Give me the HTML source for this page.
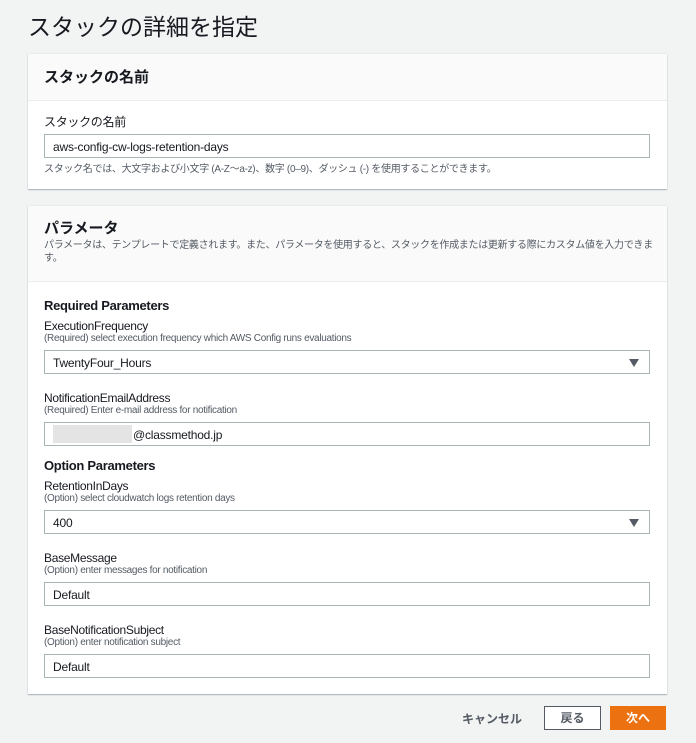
<!DOCTYPE html>
<html><head><meta charset="utf-8"><style>
*{box-sizing:border-box;margin:0;padding:0}
body{width:696px;height:743px;background:#f2f3f3;font-family:"Liberation Sans","Noto Sans CJK JP",sans-serif;color:#16191f;position:relative;overflow:hidden}
.a{position:absolute;white-space:nowrap}
.card{position:absolute;left:28px;width:639px;background:#fff;box-shadow:0 1px 1px rgba(0,31,63,.3),0 0 1px rgba(0,31,63,.15)}
.hd{background:#fafafa;border-bottom:1px solid #eaeded}
.inp{position:absolute;left:44px;width:606px;height:24px;border:1px solid #aab7b8;background:#fff;font-size:12px;padding:5px 8px;letter-spacing:-.2px}
.lb{font-size:12px;letter-spacing:-.3px}
.sub{font-size:10px;color:#545b64;letter-spacing:-.3px}
.tri{position:absolute;right:10px;top:8px;width:0;height:0;border-left:5px solid transparent;border-right:5px solid transparent;border-top:8px solid #545b64}
.h3{font-size:13px;font-weight:bold;letter-spacing:-.3px}
</style></head><body>
<div class="a" style="left:28px;top:8px;font-size:23px;color:#16191f">スタックの詳細を指定</div>
<div class="card" style="top:54px;height:135px"><div class="hd" style="height:47px"></div></div>
<div class="a" style="left:44px;top:66px;font-size:15px;font-weight:bold">スタックの名前</div>
<div class="a lb" style="left:44px;top:113px">スタックの名前</div>
<div class="inp" style="top:134px">aws-config-cw-logs-retention-days</div>
<div class="a sub" style="left:44px;top:160px">スタック名では、大文字および小文字 (A-Z～a-z)、数字 (0–9)、ダッシュ (-) を使用することができます。</div>

<div class="card" style="top:206px;height:488px"><div class="hd" style="height:76px"></div></div>
<div class="a" style="left:44px;top:217px;font-size:15px;font-weight:bold">パラメータ</div>
<div class="a sub" style="left:44px;top:239px;width:610px;white-space:normal;line-height:13px">パラメータは、テンプレートで定義されます。また、パラメータを使用すると、スタックを作成または更新する際にカスタム値を入力できます。</div>

<div class="a h3" style="left:44px;top:298px">Required Parameters</div>
<div class="a lb" style="left:44px;top:319px">ExecutionFrequency</div>
<div class="a sub" style="left:44px;top:333px">(Required) select execution frequency which AWS Config runs evaluations</div>
<div class="inp" style="top:350px">TwentyFour_Hours<div class="tri"></div></div>

<div class="a lb" style="left:44px;top:391px">NotificationEmailAddress</div>
<div class="a sub" style="left:44px;top:405px">(Required) Enter e-mail address for notification</div>
<div class="inp" style="top:422px;padding-left:88px">@classmethod.jp<div style="position:absolute;left:8px;top:2px;width:79px;height:18px;background:#e4e4e4"></div></div>

<div class="a h3" style="left:44px;top:458px">Option Parameters</div>
<div class="a lb" style="left:44px;top:479px">RetentionInDays</div>
<div class="a sub" style="left:44px;top:493px">(Option) select cloudwatch logs retention days</div>
<div class="inp" style="top:510px">400<div class="tri"></div></div>

<div class="a lb" style="left:44px;top:551px">BaseMessage</div>
<div class="a sub" style="left:44px;top:565px">(Option) enter messages for notification</div>
<div class="inp" style="top:582px">Default</div>

<div class="a lb" style="left:44px;top:623px">BaseNotificationSubject</div>
<div class="a sub" style="left:44px;top:637px">(Option) enter notification subject</div>
<div class="inp" style="top:654px">Default</div>

<div class="a" style="left:462px;top:710px;font-size:12px;font-weight:bold;color:#545b64">キャンセル</div>
<div class="a" style="left:544px;top:706px;width:57px;height:24px;border:1px solid #545b64;background:#fff;font-size:12px;font-weight:bold;color:#545b64;text-align:center;line-height:22px">戻る</div>
<div class="a" style="left:610px;top:706px;width:56px;height:24px;background:#ec7211;font-size:12px;font-weight:bold;color:#fff;text-align:center;line-height:24px">次へ</div>
</body></html>
